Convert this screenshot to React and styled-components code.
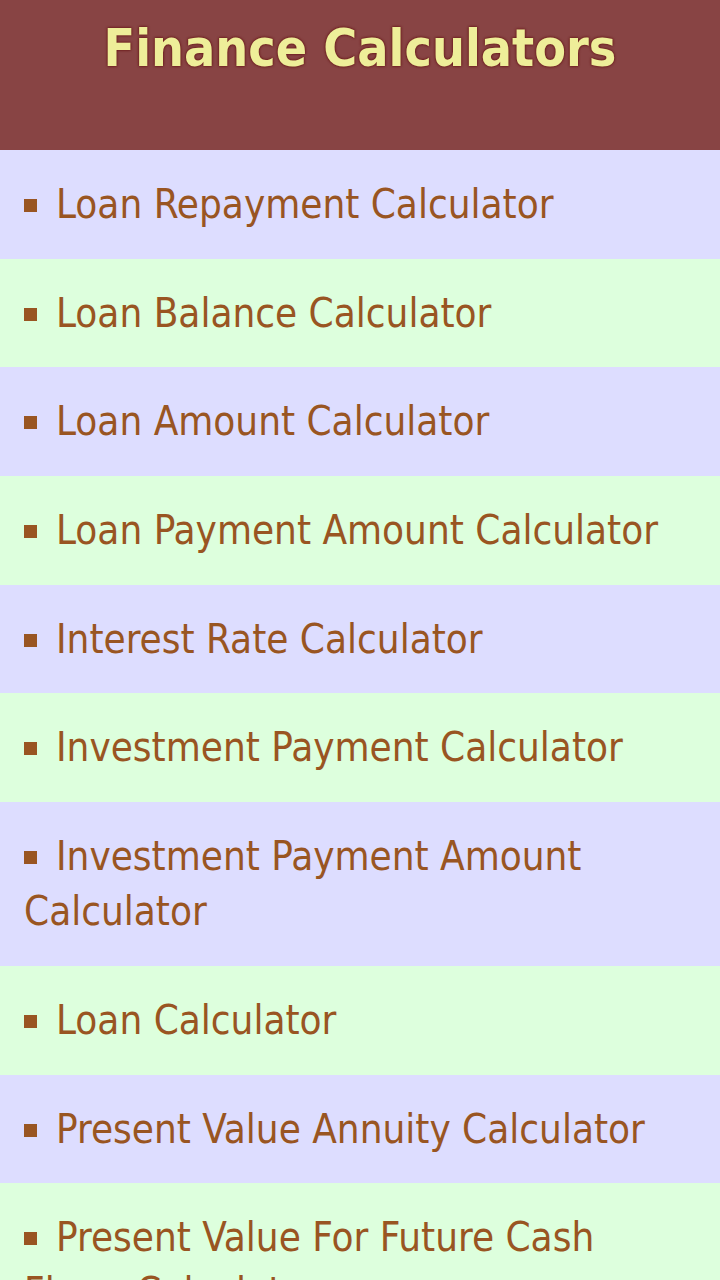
import styled, { createGlobalStyle } from "styled-components"

const GlobalStyle = createGlobalStyle`
  body {
    margin: 0;
    background: #ddffdd;
    font-family: "DejaVu Sans Condensed", "DejaVu Sans", sans-serif;
  }
`

const Page = styled.div`
  width: 720px;
  height: 1280px;
  overflow: hidden;
`

const Header = styled.header`
  height: 150px;
  background-color: #884444;
  display: flex;
  justify-content: center;
  align-items: flex-start;
`

const Title = styled.h1`
  margin: 18px 0 0;
  font-size: 51.5px;
  font-weight: bold;
  color: #eeee99;
  text-shadow: 0 0 2px #661515, 0 0 3px #661515;
`

const List = styled.ul`
  list-style: none;
  margin: 0;
  padding: 0;
`

const Item = styled.li`
  background-color: ${(p) => (p.$alt ? "#ddffdd" : "#ddddff")};
  padding: 27px 24px 26.7px;
  font-size: 40px;
  line-height: 55px;
  color: #995522;
`

const Bullet = styled.span`
  display: inline-block;
  width: 13px;
  height: 13px;
  background: #995522;
  margin-right: 19px;
  vertical-align: 6px;
`

const calculators = [
  "Loan Repayment Calculator",
  "Loan Balance Calculator",
  "Loan Amount Calculator",
  "Loan Payment Amount Calculator",
  "Interest Rate Calculator",
  "Investment Payment Calculator",
  "Investment Payment Amount Calculator",
  "Loan Calculator",
  "Present Value Annuity Calculator",
  "Present Value For Future Cash Flows Calculator",
]

const App = () => {
  return (
    <Page>
      <GlobalStyle />
      <Header>
        <Title>Finance Calculators</Title>
      </Header>
      <List>
        {calculators.map((name, i) => (
          <Item key={name} $alt={i % 2 === 1}>
            <Bullet />
            {name}
          </Item>
        ))}
      </List>
    </Page>
  )
}

export default App
